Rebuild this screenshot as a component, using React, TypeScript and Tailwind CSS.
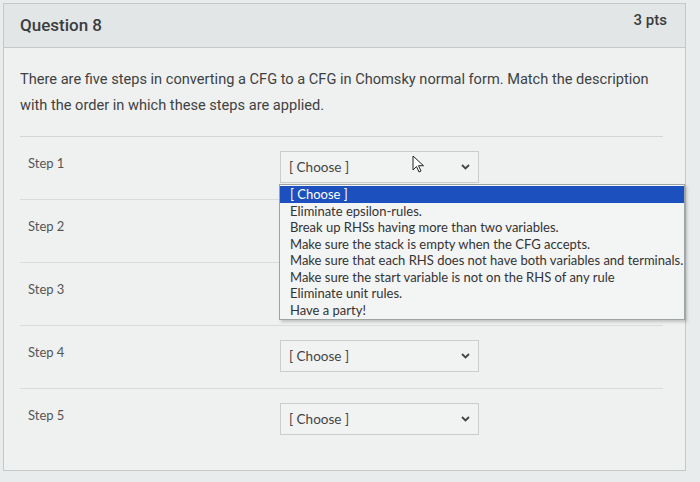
import React from 'react'

const steps = ['Step 1', 'Step 2', 'Step 3', 'Step 4', 'Step 5']

const options = [
    '[ Choose ]',
    'Eliminate epsilon-rules.',
    'Break up RHSs having more than two variables.',
    'Make sure the stack is empty when the CFG accepts.',
    'Make sure that each RHS does not have both variables and terminals.',
    'Make sure the start variable is not on the RHS of any rule',
    'Eliminate unit rules.',
    'Have a party!',
]

function Chevron() {
    return (
        <svg width="9" height="6" viewBox="0 0 9 6" className="text-[#444]">
            <path d="M1 1l3.5 3.5L8 1" fill="none" stroke="currentColor" strokeWidth="1.8" />
        </svg>
    )
}

function Select({hidden}: {hidden?: boolean}) {
    return (
        <div
            className={`flex items-center justify-between w-[199px] h-[32px] pl-[8px] pr-[8px] border border-[#c9cdcd] bg-[#f1f3f2] text-[13.5px] text-[#444] font-['Lato',sans-serif] ${hidden ? 'invisible' : ''}`}>
            <span>[ Choose ]</span>
            <Chevron />
        </div>
    )
}

export default function App() {
    return (
        <div className="w-[700px] h-[482px] bg-[#e9ecec] pt-[3px] pl-[3px] font-['Roboto',sans-serif] overflow-hidden">
            <div className="w-[683px] h-[468px] border border-[#c4c8c8] bg-[#eff1f0] flex flex-col">
                <div className="h-[44px] bg-[#e3e6e6] border-b border-[#c4c8c8] flex items-start justify-between pl-[16px] pr-[18px]">
                    <span className="mt-[9px] text-[17px] font-medium text-[#3a3d3e]">Question 8</span>
                    <span className="mt-[5px] text-[15px] font-medium text-[#3a3d3e]">3 pts</span>
                </div>
                <div className="px-[16px] pt-[18px]">
                    <p className="text-[14.6px] leading-[26px] text-[#3e4243] w-[650px]">
                        There are five steps in converting a CFG to a CFG in Chomsky normal form. Match the description with the order in which these steps are applied.
                    </p>
                    <div className="mt-[18px] border-t border-[#d2d6d6] w-[643px]" />
                    <div className="relative flex flex-col">
                        {steps.map((s, i) => (
                            <div
                                key={s}
                                className={`flex items-start h-[63px] w-[643px] ${i < 4 ? 'border-b border-[#d8dcdc]' : ''}`}>
                                <span className="w-[260px] pl-[8px] pt-[17px] text-[13px] text-[#555] font-['Lato',sans-serif]">{s}</span>
                                <div className="pt-[14px]">
                                    <Select hidden={i === 1 || i === 2} />
                                </div>
                            </div>
                        ))}
                        <div className="absolute left-[259px] top-[47px] w-[406px] border border-[#9ea3a3] bg-[#f3f4f4] shadow-[2px_2px_3px_rgba(0,0,0,0.2)] font-['Lato',sans-serif] text-[13px] text-[#333] py-[1px]">
                            {options.map((o, i) => (
                                <div
                                    key={o}
                                    className={`h-[16.5px] leading-[16px] px-[10px] whitespace-nowrap ${i === 0 ? 'bg-[#1c50bf] text-white' : ''}`}>
                                    {o}
                                </div>
                            ))}
                        </div>
                        <svg
                            className="absolute left-[392px] top-[18px]"
                            width="12"
                            height="18"
                            viewBox="0 0 12 18">
                            <path d="M1 1v14l3.5-3.5 2.5 5.5 2-1-2.5-5.3h5z" fill="#fff" stroke="#222" strokeWidth="1" strokeLinejoin="round" />
                        </svg>
                    </div>
                </div>
            </div>
        </div>
    )
}
